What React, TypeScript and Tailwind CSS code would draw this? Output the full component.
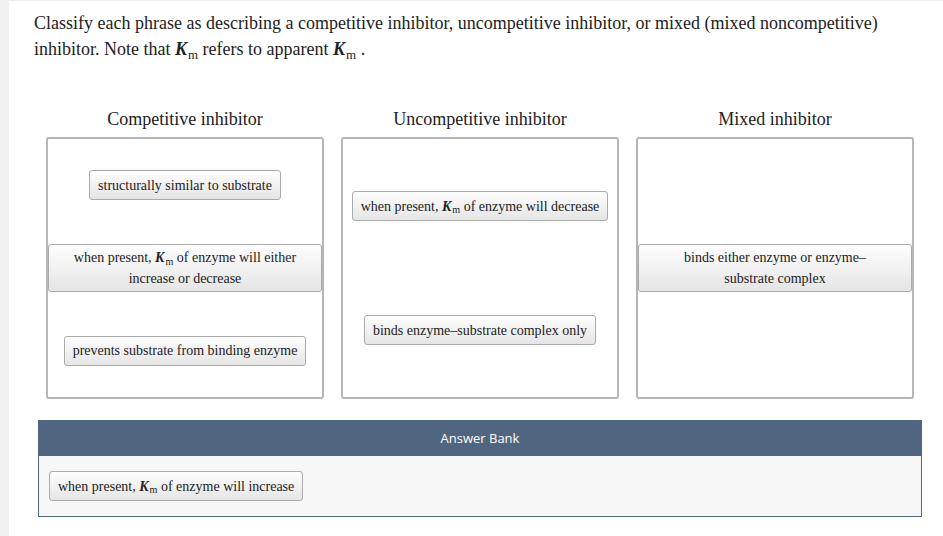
import React from "react";

const serif = { fontFamily: '"Liberation Serif", "Times New Roman", serif' };

function Km() {
  return (
    <span className="whitespace-nowrap">
      <i className="font-bold">K</i>
      <span className="inline-block text-[0.72em] leading-none relative top-[0.28em] ml-[1px]">m</span>
    </span>
  );
}

function Item({ children, wide = false }: { children: React.ReactNode; wide?: boolean }) {
  return (
    <div
      className={`min-h-[30px] flex items-center justify-center text-center rounded-[3px] border border-[#ababab] bg-gradient-to-b from-[#fefefe] to-[#e5e5e5] text-[14px] leading-[21px] text-[#222] py-[2px] ${
        wide ? "w-full px-[16px]" : "px-[8px]"
      }`}
    >
      <span>{children}</span>
    </div>
  );
}

function Column({ title, items }: { title: string; items: React.ReactNode[] }) {
  return (
    <div className="flex flex-col">
      <div className="text-center text-[18px] leading-[20px] text-[#222] h-[20px]">{title}</div>
      <div className="mt-[8px] h-[262px] border-2 border-[#b5b5b5] rounded-[3px] bg-white flex flex-col py-[5px]">
        {items.map((it, i) => (
          <div key={i} className="flex-1 flex items-center justify-center">
            {it}
          </div>
        ))}
      </div>
    </div>
  );
}

export default function App() {
  return (
    <div className="w-[943px] h-[536px] flex bg-white overflow-hidden" style={serif}>
      <div className="w-[9px] bg-[#f1f1f1] shrink-0" />
      <div className="flex-1 border-t border-[#ececec] pl-[25px] pt-[9px]">
        <p className="text-[18px] leading-[26px] text-[#222] pr-[40px]">
          Classify each phrase as describing a competitive inhibitor, uncompetitive inhibitor, or mixed (mixed noncompetitive)
          inhibitor. Note that <Km /> refers to apparent <Km /> .
        </p>
        <div className="ml-[12px] mt-[47px] grid grid-cols-[278px_278px_278px] gap-x-[17px]">
          <Column
            title="Competitive inhibitor"
            items={[
              <Item key="a">structurally similar to substrate</Item>,
              <Item key="b" wide>
                when present, <Km /> of enzyme will either
                <br />
                increase or decrease
              </Item>,
              <Item key="c">prevents substrate from binding enzyme</Item>,
            ]}
          />
          <Column
            title="Uncompetitive inhibitor"
            items={[
              <Item key="a">
                when present, <Km /> of enzyme will decrease
              </Item>,
              <Item key="b">binds enzyme–substrate complex only</Item>,
            ]}
          />
          <Column
            title="Mixed inhibitor"
            items={[
              <Item key="a" wide>
                binds either enzyme or enzyme–
                <br />
                substrate complex
              </Item>,
            ]}
          />
        </div>
        <div className="ml-[4px] mt-[21px] w-[884px] border border-[#506680]">
          <div
            className="h-[35px] bg-[#506680] text-white text-[13px] flex items-center justify-center"
            style={{ fontFamily: '"Open Sans", sans-serif' }}
          >
            Answer Bank
          </div>
          <div className="bg-[#f7f7f7] px-[10px] py-[15px] flex">
            <Item>
              when present, <Km /> of enzyme will increase
            </Item>
          </div>
        </div>
      </div>
    </div>
  );
}
